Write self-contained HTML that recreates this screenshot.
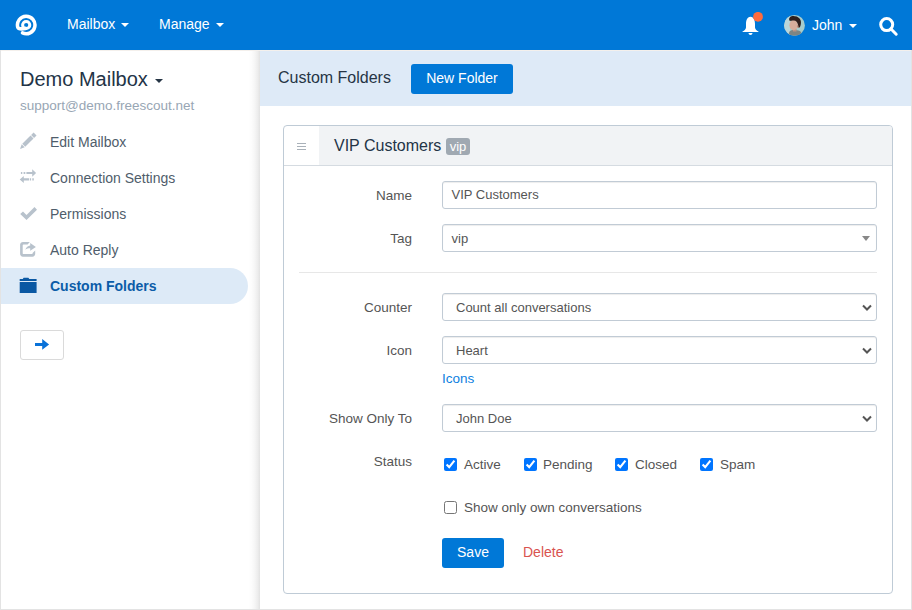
<!DOCTYPE html>
<html><head><meta charset="utf-8">
<style>
*{box-sizing:border-box;}
html,body{margin:0;padding:0;width:912px;height:610px;overflow:hidden;background:#fff;font-family:"Liberation Sans",sans-serif;color:#333;font-size:14px;}
.a{position:absolute;white-space:nowrap;}
#nav{position:absolute;left:0;top:0;width:912px;height:50px;background:#0078d7;}
.nt{position:absolute;color:#fff;font-size:14px;line-height:16px;top:16px;}
.caret{position:absolute;width:0;height:0;border-left:4px solid transparent;border-right:4px solid transparent;border-top:4px solid #fff;}
.menu{position:absolute;left:0;width:248px;height:36px;}
.menu .t{position:absolute;left:50px;top:10px;font-size:14px;line-height:16px;color:#4f5d6b;}
.menu.active{background:#ddeaf7;border-radius:0 18px 18px 0;}
.menu.active .t{color:#0b5ca8;font-weight:bold;}
.ic{position:absolute;left:18px;top:6px;}
.lbl{position:absolute;font-size:13.5px;color:#555;line-height:16px;text-align:right;width:200px;left:212px;}
.inp{position:absolute;left:442px;width:435px;height:28px;border:1px solid #c1cbd5;border-radius:3px;background:#fff;box-shadow:inset 0 1px 1px rgba(0,0,0,.075);}
.inp .v{position:absolute;left:8.5px;top:5px;font-size:13px;line-height:16px;color:#555;}
.chev{position:absolute;right:3px;top:9px;}
.cbt{position:absolute;font-size:13.5px;color:#555;line-height:16px;}
input[type=checkbox]{position:absolute;margin:0;width:13px;height:13px;}
</style></head><body>
<!-- NAV -->
<div id="nav">
  <svg class="a" style="left:15px;top:14px" width="22" height="22" viewBox="0 0 22 22">
    <circle cx="11.2" cy="11" r="3.6" fill="none" stroke="#fff" stroke-width="3"/>
    <path d="M7.5 18.93 A8.75 8.75 0 1 0 2.75 13.26 C3.27 15.2 8.5 14.9 10.58 14.55" fill="none" stroke="#fff" stroke-width="3.5" stroke-linecap="round"/>
  </svg>
  <div class="nt" style="left:67px">Mailbox</div><div class="caret" style="left:121px;top:23px"></div>
  <div class="nt" style="left:159px">Manage</div><div class="caret" style="left:216px;top:23px"></div>
  <!-- bell -->
  <svg class="a" style="left:740px;top:12px" width="24" height="26" viewBox="0 0 24 26">
    <path d="M10.5 4.8 C7 5.3 6 8.5 6 12 L6 15.5 C6 17 4.5 18.5 2.5 19.5 L2.5 20 L18.5 20 L18.5 19.5 C16.5 18.5 15 17 15 15.5 L15 12 C15 8.5 14 5.3 10.5 4.8 Z" fill="#fff"/>
    <path d="M8.5 21 L12.5 21 C12.5 22.3 11.5 23 10.5 23 C9.5 23 8.5 22.3 8.5 21Z" fill="#fff"/>
    <circle cx="18" cy="4.8" r="4.9" fill="#ff6b3d"/>
  </svg>
  <!-- avatar -->
  <svg class="a" style="left:784px;top:15px" width="21" height="21" viewBox="0 0 21 21">
    <defs><clipPath id="av"><circle cx="10.5" cy="10.4" r="10.4"/></clipPath></defs>
    <g clip-path="url(#av)">
      <rect width="21" height="21" fill="#a6cccc"/>
      <rect width="6" height="21" fill="#b9d6da"/>
      <path d="M4 21 L5.5 16.5 C7 15 9 14.8 11 15 C13.5 15.2 15.5 15.5 17 17 L18.5 21 Z" fill="#7d8584"/>
      <path d="M8.5 14 L12.5 14 L12.5 16.5 L9 16.5 Z" fill="#b89485"/>
      <ellipse cx="9.7" cy="10.2" rx="4.3" ry="5.1" fill="#d7ae9c"/>
      <ellipse cx="14.3" cy="11.2" rx="1.2" ry="1.8" fill="#b88a78"/>
      <path d="M5.1 3.8 C5.5 2.2 7 1.2 8.6 1.05 C11 0.9 13.8 1.5 15.8 3.8 C17.2 5.6 17.3 8.5 16.4 11 C16 12.2 15.2 12.8 14.9 12.8 C14.6 11.5 14.2 10 13.8 9 C13 6.8 12 5.8 10 5.6 C8.5 5.5 6.8 5.9 5.9 6 C5.3 5.5 5 4.7 5.1 3.8 Z" fill="#2e1f1c"/>
    </g>
  </svg>
  <div class="nt" style="left:812px;top:17px">John</div><div class="caret" style="left:849px;top:24px"></div>
  <!-- search -->
  <svg class="a" style="left:876px;top:14px" width="24" height="24" viewBox="0 0 24 24">
    <circle cx="10.7" cy="10.6" r="6" fill="none" stroke="#fff" stroke-width="3"/>
    <path d="M14.8 14.8 L20.2 20.2" stroke="#fff" stroke-width="3" stroke-linecap="round"/>
  </svg>
</div>

<!-- SIDEBAR -->
<div class="a" style="left:0;top:50px;width:260px;height:560px;background:#fff"></div>
<div class="a" style="left:248px;top:50px;width:12px;height:560px;background:linear-gradient(to right,rgba(0,0,0,0) 0%,rgba(0,0,0,0.01) 30%,rgba(0,0,0,0.035) 55%,rgba(0,0,0,0.07) 80%,rgba(0,0,0,0.115) 100%)"></div>
<div class="a" style="left:20px;top:67px;font-size:20px;line-height:24px;color:#233447">Demo Mailbox</div>
<div class="caret" style="left:155px;top:79px;border-top-color:#263545"></div>
<div class="a" style="left:20px;top:98px;font-size:13.5px;line-height:16px;color:#98a6b4">support@demo.freescout.net</div>

<div class="menu" style="top:124px"><svg class="ic" width="24" height="24" viewBox="0 0 24 24"><path d="M2.00 19.00 L3.70 14.33 L6.67 17.30 Z M4.26 13.77 L12.54 5.49 L15.51 8.46 L7.23 16.74 Z M13.10 4.93 L15.58 2.45 L18.55 5.42 L16.07 7.90 Z" fill="#b8c2cc"/></svg><span class="t">Edit Mailbox</span></div>
<div class="menu" style="top:160px"><svg class="ic" width="24" height="24" viewBox="0 0 24 24"><path d="M2.9 5.9 H4.3 V8.1 H2.9 Z M5.6 5.9 H7.3 V8.1 H5.6 Z M8.4 5.9 H14.2 V3.2 L18.1 7 L14.2 10.7 V8.1 H8.4 Z M1.7 13.4 L5.8 9.9 V12.3 H11 V14.6 H5.8 V16.9 Z M11.8 12.3 H13.1 V14.6 H11.8 Z M14.3 12.3 H15.8 V14.6 H14.3 Z" fill="#b8c2cc"/></svg><span class="t">Connection Settings</span></div>
<div class="menu" style="top:196px"><svg class="ic" width="24" height="24" viewBox="0 0 24 24"><path d="M2.2 12 L5 9.5 L8.5 13 L16.5 5 L19 7.7 L8.5 18 Z" fill="#b8c2cc"/></svg><span class="t">Permissions</span></div>
<div class="menu" style="top:232px"><svg class="ic" width="24" height="24" viewBox="0 0 24 24"><path d="M5 3.9 H11.8 L9.6 6.5 H5.6 C5 6.5 4.7 6.8 4.7 7.4 V15.2 C4.7 15.8 5 16.1 5.6 16.1 H13.7 C14.3 16.1 14.6 15.8 14.6 15.2 V14.9 L17.2 12.6 V16.1 C17.2 17.6 16 18.7 14.5 18.7 H4.8 C3.3 18.7 2.1 17.6 2.1 16.1 V6.6 C2.1 5.1 3.3 3.9 5 3.9 Z M7.3 11.7 C8.3 9.5 10 7.9 12.2 7.6 V4.9 L17.9 8.9 L12.2 12.8 V10.2 C10.3 10.2 8.6 10.6 7.3 11.7 Z" fill="#b8c2cc"/></svg><span class="t">Auto Reply</span></div>
<div class="menu active" style="top:268px"><svg class="ic" width="24" height="24" viewBox="0 0 24 24"><path d="M1.7 4.9 H4.8 L5.6 3.7 H10.4 L11.3 4.9 H18.6 V6.9 H1.7 Z M1.7 7.9 H18.6 V18.9 H1.7 Z" fill="#0a58a3"/></svg><span class="t">Custom Folders</span></div>
<div class="a" style="left:20px;top:330px;width:44px;height:30px;border:1px solid #dadada;border-radius:3px;background:#fff"></div>
<svg class="a" style="left:34px;top:338px" width="16" height="14" viewBox="0 0 16 14"><path d="M1 5 H8.2 V1.1 L15.1 6.45 L8.2 11.8 V8 H1 Z" fill="#0a72d8"/></svg>

<!-- CONTENT -->
<div class="a" style="left:260px;top:50px;width:652px;height:560px;background:#fff"></div>
<div class="a" style="left:260px;top:50px;width:652px;height:56px;background:#deeaf7"></div>
<div class="a" style="left:278px;top:69px;font-size:16px;line-height:18px;color:#263545">Custom Folders</div>
<div class="a" style="left:411px;top:64px;width:102px;height:30px;background:#0078d7;border-radius:3px;color:#fff;font-size:14px;line-height:28px;text-align:center">New Folder</div>

<!-- PANEL -->
<div class="a" style="left:283px;top:125px;width:610px;height:469px;border:1px solid #bfcbd6;border-radius:4px;background:#fff"></div>
<div class="a" style="left:319px;top:126px;width:573px;height:39px;background:#f1f3f5;border-radius:0 3px 0 0"></div>
<div class="a" style="left:284px;top:165px;width:608px;height:1px;background:#d5dbe1"></div>
<div class="a" style="left:297px;top:143px;width:9px;height:1px;background:#a9b1b9"></div><div class="a" style="left:297px;top:146px;width:9px;height:1px;background:#a9b1b9"></div><div class="a" style="left:297px;top:149px;width:9px;height:1px;background:#a9b1b9"></div>
<div class="a" style="left:334px;top:137px;font-size:16px;line-height:18px;color:#233447">VIP Customers</div>
<div class="a" style="left:446px;top:138px;width:24px;height:17px;background:#a0a9b2;border-radius:3px;color:#fff;font-size:13px;line-height:17px;text-align:center">vip</div>

<div class="lbl" style="top:188px">Name</div>
<div class="inp" style="top:181px"><span class="v">VIP Customers</span></div>
<div class="lbl" style="top:231px">Tag</div>
<div class="inp" style="top:224px"><span class="v" style="top:6px">vip</span><div class="a" style="right:6px;top:11px;width:0;height:0;border-left:4px solid transparent;border-right:4px solid transparent;border-top:5px solid #888"></div></div>
<div class="a" style="left:299px;top:272px;width:578px;height:1px;background:#e7e7e7"></div>

<div class="lbl" style="top:300px">Counter</div>
<div class="inp" style="top:293px"><span class="v" style="left:13px;top:6px">Count all conversations</span><svg class="chev" width="12" height="10" viewBox="0 0 12 10"><path d="M2 2.5 L6 6.5 L10 2.5" fill="none" stroke="#555" stroke-width="2"/></svg></div>
<div class="lbl" style="top:343px">Icon</div>
<div class="inp" style="top:336px"><span class="v" style="left:13px;top:6px">Heart</span><svg class="chev" width="12" height="10" viewBox="0 0 12 10"><path d="M2 2.5 L6 6.5 L10 2.5" fill="none" stroke="#555" stroke-width="2"/></svg></div>
<div class="a" style="left:442px;top:371px;font-size:13.5px;line-height:16px;color:#0d80e0">Icons</div>
<div class="lbl" style="top:411px">Show Only To</div>
<div class="inp" style="top:404px"><span class="v" style="left:13px;top:6px">John Doe</span><svg class="chev" width="12" height="10" viewBox="0 0 12 10"><path d="M2 2.5 L6 6.5 L10 2.5" fill="none" stroke="#555" stroke-width="2"/></svg></div>

<div class="lbl" style="top:454px">Status</div>
<input type="checkbox" checked style="left:444px;top:458px"><div class="cbt" style="left:464px;top:457px">Active</div>
<input type="checkbox" checked style="left:524px;top:458px"><div class="cbt" style="left:543px;top:457px">Pending</div>
<input type="checkbox" checked style="left:615px;top:458px"><div class="cbt" style="left:635px;top:457px">Closed</div>
<input type="checkbox" checked style="left:700px;top:458px"><div class="cbt" style="left:720px;top:457px">Spam</div>
<input type="checkbox" style="left:444px;top:501px"><div class="cbt" style="left:464px;top:500px">Show only own conversations</div>

<div class="a" style="left:442px;top:538px;width:62px;height:30px;background:#0078d7;border-radius:3px;color:#fff;font-size:14px;line-height:28px;text-align:center">Save</div>
<div class="a" style="left:523px;top:544px;font-size:14px;line-height:16px;color:#d9534f">Delete</div>

<!-- frame border -->
<div class="a" style="left:0;top:50px;width:912px;height:1px;background:#f4f0ec"></div>
<div class="a" style="left:0;top:50px;width:1px;height:560px;background:#e3e3e3"></div>
<div class="a" style="left:911px;top:50px;width:1px;height:560px;background:#e3e3e3"></div>
<div class="a" style="left:0;top:609px;width:912px;height:1px;background:#e3e3e3"></div>
</body></html>
